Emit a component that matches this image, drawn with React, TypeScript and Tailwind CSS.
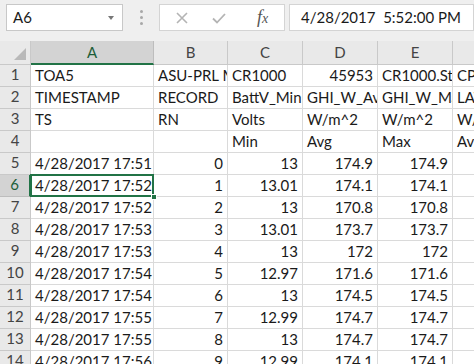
import React from "react";

const cols = ["A", "B", "C", "D", "E", "F"];
const widths = [123, 74, 75, 75, 75, 75];

type Cell = { t: string; r?: boolean };

const rows: Cell[][] = [
  [{ t: "TOA5" }, { t: "ASU-PRL Met" }, { t: "CR1000" }, { t: "45953", r: true }, { t: "CR1000.Std" }, { t: "CPU" }],
  [{ t: "TIMESTAMP" }, { t: "RECORD" }, { t: "BattV_Min" }, { t: "GHI_W_Avg" }, { t: "GHI_W_Max" }, { t: "LAT" }],
  [{ t: "TS" }, { t: "RN" }, { t: "Volts" }, { t: "W/m^2" }, { t: "W/m^2" }, { t: "W/m" }],
  [{ t: "" }, { t: "" }, { t: "Min" }, { t: "Avg" }, { t: "Max" }, { t: "Avg" }],
];

const data: [string, string, string, string, string][] = [
  ["4/28/2017 17:51", "0", "13", "174.9", "174.9"],
  ["4/28/2017 17:52", "1", "13.01", "174.1", "174.1"],
  ["4/28/2017 17:52", "2", "13", "170.8", "170.8"],
  ["4/28/2017 17:53", "3", "13.01", "173.7", "173.7"],
  ["4/28/2017 17:53", "4", "13", "172", "172"],
  ["4/28/2017 17:54", "5", "12.97", "171.6", "171.6"],
  ["4/28/2017 17:54", "6", "13", "174.5", "174.5"],
  ["4/28/2017 17:55", "7", "12.99", "174.7", "174.7"],
  ["4/28/2017 17:55", "8", "13", "174.7", "174.7"],
  ["4/28/2017 17:56", "9", "12.99", "174.1", "174.1"],
];

data.forEach((d) => {
  rows.push([
    { t: d[0] },
    { t: d[1], r: true },
    { t: d[2], r: true },
    { t: d[3], r: true },
    { t: d[4], r: true },
    { t: "" },
  ]);
});

const font = { fontFamily: "Lato, 'Open Sans', sans-serif" };

export default function App() {
  return (
    <div
      className="w-[474px] h-[364px] overflow-hidden bg-[#efefef] text-[#1a1a1a]"
      style={font}
    >
      {/* formula bar */}
      <div className="h-[41px] flex items-start pt-[4px] pl-[6px]">
        <div className="w-[117px] h-[27px] bg-white border border-[#c8c8c8] flex items-center pl-[6px] pr-[8px] justify-between">
          <span className="text-[15px]">A6</span>
          <span className="w-0 h-0 border-l-[3.5px] border-r-[3.5px] border-t-[4px] border-l-transparent border-r-transparent border-t-[#777]" />
        </div>
        <div className="w-[36px] h-[27px] flex flex-col items-center justify-center gap-[3px]">
          <span className="w-[3px] h-[3px] bg-[#a8a8a8] rounded-full" />
          <span className="w-[3px] h-[3px] bg-[#a8a8a8] rounded-full" />
          <span className="w-[3px] h-[3px] bg-[#a8a8a8] rounded-full" />
        </div>
        <div className="w-[126px] h-[27px] bg-white border border-[#d4d4d4] flex items-center">
          <svg width="14" height="14" viewBox="0 0 14 14" className="ml-[15px]">
            <path d="M2 2 L12 12 M12 2 L2 12" stroke="#b4b4b4" strokeWidth="1.6" fill="none" />
          </svg>
          <svg width="16" height="14" viewBox="0 0 16 14" className="ml-[22px]">
            <path d="M2 7.5 L6 11.5 L14 3" stroke="#b4b4b4" strokeWidth="1.8" fill="none" />
          </svg>
          <span
            className="ml-[30px] text-[18px] italic text-[#555]"
            style={{ fontFamily: "'Liberation Serif', 'DejaVu Serif', serif" }}
          >
            f<span className="text-[14px]">x</span>
          </span>
        </div>
        <div className="ml-[4px] flex-1 h-[27px] bg-white border border-[#d4d4d4] flex items-center pl-[11px] text-[15px] whitespace-pre">
          {"4/28/2017  5:52:00 PM"}
        </div>
      </div>

      {/* sheet */}
      <div className="bg-white">
        {/* column header row */}
        <div className="flex h-[24px] bg-[#e9e9e9]">
          <div className="w-[31px] shrink-0 h-full border-r border-b border-[#c9c9c9] relative">
            <svg width="12" height="12" viewBox="0 0 12 12" className="absolute right-[4px] bottom-[4px]">
              <path d="M12 0 L12 12 L0 12 Z" fill="#b9b9b9" />
            </svg>
          </div>
          {cols.map((c, i) => (
            <div
              key={c}
              style={{ width: widths[i] }}
              className={
                "shrink-0 h-full flex items-center justify-center text-[15px] border-r " +
                (i === 0
                  ? "bg-[#d3d3d3] border-b-2 border-b-[#217346] border-r-[#bdbdbd] text-[#1d5e39]"
                  : "border-b border-[#c9c9c9] text-[#444]")
              }
            >
              {c}
            </div>
          ))}
        </div>

        {rows.map((row, ri) => {
          const active = ri === 5;
          return (
            <div key={ri} className="flex h-[22px]">
              <div
                className={
                  "w-[31px] shrink-0 h-full flex items-end justify-center pb-[1px] text-[15px] border-b " +
                  (active
                    ? "bg-[#d3d3d3] border-r-2 border-r-[#217346] border-b-[#bdbdbd] text-[#1d5e39]"
                    : "bg-[#e9e9e9] border-r border-[#c9c9c9] text-[#444]")
                }
              >
                {ri + 1}
              </div>
              {row.map((cell, ci) => {
                const sel = active && ci === 0;
                return (
                  <div
                    key={ci}
                    style={{ width: widths[ci] }}
                    className={
                      "shrink-0 h-full relative border-r border-b border-[#dadada] " +
                      (sel ? "z-10" : "")
                    }
                  >
                    <div
                      className={
                        "h-full overflow-hidden whitespace-nowrap flex items-end pb-[1px] text-[15px] leading-[20px] " +
                        (cell.r ? "justify-end pr-[4px]" : "pl-[4px]")
                      }
                    >
                      {cell.t}
                    </div>
                    {sel && (
                      <>
                        <div className="absolute -left-[1px] -top-[1px] -right-[1px] -bottom-[1px] border-2 border-[#217346] pointer-events-none" />
                        <div className="absolute -right-[4px] -bottom-[4px] w-[6px] h-[6px] bg-[#217346] border border-white" />
                      </>
                    )}
                  </div>
                );
              })}
            </div>
          );
        })}
      </div>
    </div>
  );
}
